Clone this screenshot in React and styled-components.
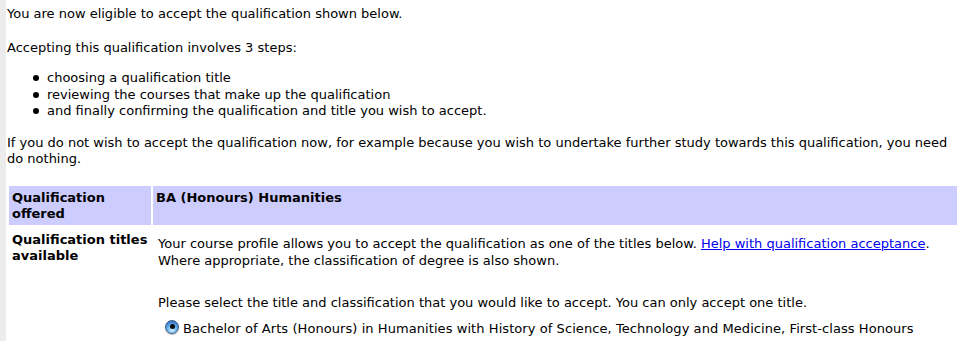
import React from "react";
import styled, { createGlobalStyle } from "styled-components";

const Global = createGlobalStyle`
  html, body { margin: 0; padding: 0; background: #fff; }
  body { font-family: "DejaVu Sans", Verdana, sans-serif; font-size: 13px; color: #000; }
`;

const Page = styled.div`
  display: flex;
  min-height: 341px;
`;

const Sidebar = styled.div`
  width: 6px;
  flex: none;
  background: #ececec;
`;

const Main = styled.div`
  flex: 1;
  padding: 6px 12px 0 1px;
  line-height: 16.5px;
`;

const Para = styled.p`
  margin: ${(p) => p.$before || 0}px 0 ${(p) => p.$after || 0}px 0;
`;

const Steps = styled.ul`
  margin: 14px 0 15px 0;
  padding-left: 40px;
  list-style: none;
`;

const Step = styled.li`
  position: relative;
  &::before {
    content: "";
    position: absolute;
    left: -14px;
    top: 5px;
    width: 6px;
    height: 6px;
    border-radius: 50%;
    background: #000;
  }
`;

const Table = styled.div`
  display: grid;
  grid-template-columns: 142px 804px;
  gap: 2px;
  padding: 2px;
  margin-top: 16px;
`;

const Cell = styled.div`
  padding: ${(p) => p.$pad || "4px 3px 3px 3px"};
  background: ${(p) => (p.$head ? "#ccccff" : "transparent")};
  font-weight: ${(p) => (p.$bold ? "bold" : "normal")};
  line-height: 16px;
`;

const Body = styled.div`
  padding: 8px 0 0 5px;
  line-height: 17px;
`;

const Link = styled.a`
  color: #0000ee;
  text-decoration: underline;
`;

const Option = styled.label`
  display: flex;
  align-items: center;
  gap: 4px;
  margin: 9px 0 0 7px;
  letter-spacing: 0.07px;
`;

const Radio = styled.span`
  width: 14px;
  height: 14px;
  border-radius: 50%;
  flex: none;
  box-sizing: border-box;
  border: 1px solid #3c5f8c;
  background: radial-gradient(circle at 50% 75%, #d6f1ff 0%, #6fb6f0 40%, #2d6fc6 85%, #1f4f96 100%);
  display: flex;
  align-items: center;
  justify-content: center;
  box-shadow: 0 1px 1px rgba(0, 0, 0, 0.3);
  margin-top: -3px;
  &::after {
    content: "";
    width: 5px;
    height: 5px;
    border-radius: 50%;
    background: #0d0d0d;
  }
`;

export default function App() {
  return (
    <>
      <Global />
      <Page>
        <Sidebar />
        <Main>
          <Para $after={17}>You are now eligible to accept the qualification shown below.</Para>
          <Para>Accepting this qualification involves 3 steps:</Para>
          <Steps>
            <Step>choosing a qualification title</Step>
            <Step>reviewing the courses that make up the qualification</Step>
            <Step>and finally confirming the qualification and title you wish to accept.</Step>
          </Steps>
          <Para>
            If you do not wish to accept the qualification now, for example because you wish to undertake further study towards this qualification, you need do nothing.
          </Para>
          <Table>
            <Cell $head $bold>Qualification offered</Cell>
            <Cell $head $bold>BA (Honours) Humanities</Cell>
            <Cell $bold $pad="5px 3px 3px 3px">Qualification titles available</Cell>
            <Cell $pad="0">
              <Body>
                Your course profile allows you to accept the qualification as one of the titles below.{" "}
                <Link href="#">Help with qualification acceptance</Link>.
                <br />
                Where appropriate, the classification of degree is also shown.
                <Para $before={25}>
                  Please select the title and classification that you would like to accept. You can only accept one title.
                </Para>
                <Option>
                  <Radio />
                  Bachelor of Arts (Honours) in Humanities with History of Science, Technology and Medicine, First-class Honours
                </Option>
              </Body>
            </Cell>
          </Table>
        </Main>
      </Page>
    </>
  );
}
